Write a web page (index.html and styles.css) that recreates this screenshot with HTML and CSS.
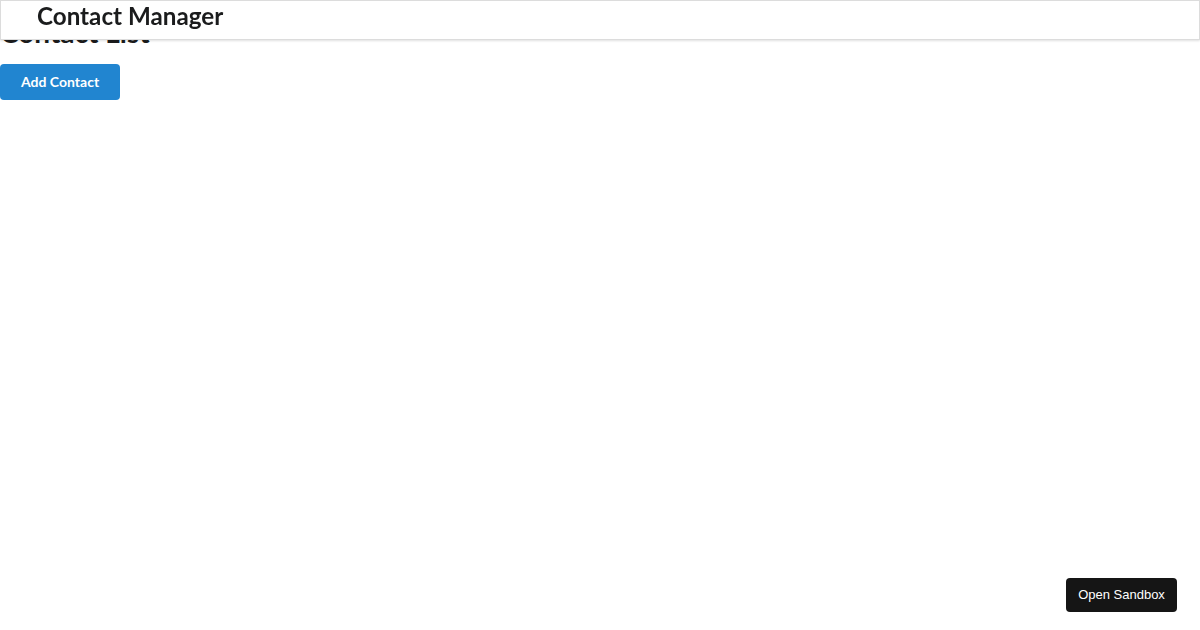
FILE: index.html
```html
<!DOCTYPE html>
<html>
<head>
<meta charset="utf-8">
<link rel="stylesheet" href="styles.css">
</head>
<body>
<header class="topbar">
  <span class="brand">Contact Manager</span>
</header>
<main class="content">
  <h1 class="page-title">Contact List</h1>
  <button class="btn-primary">Add Contact</button>
</main>
<a class="sandbox-btn">Open Sandbox</a>
</body>
</html>
```
FILE: styles.css
```css
html, body {
  margin: 0;
  padding: 0;
  background: #fff;
  font-family: Lato, "Helvetica Neue", Arial, sans-serif;
  color: rgba(0,0,0,.87);
}
.topbar {
  position: fixed;
  top: 0;
  left: 0;
  right: 0;
  height: 38px;
  background: #fff;
  border: 1px solid #dcdcdc;
  box-shadow: 0 1px 2px rgba(0,0,0,.12);
  display: flex;
  align-items: flex-start;
  padding-left: 36px;
  z-index: 10;
}
.brand {
  font-size: 24.2px;
  line-height: 1.2;
  font-weight: 700;
  color: #1b1c1d;
}
.content {
  display: flex;
  flex-direction: column;
  align-items: flex-start;
}
.page-title {
  font-size: 28px;
  font-weight: 700;
  line-height: 36px;
  margin: 14px 0 14px;
  color: #1b1c1d;
}
.btn-primary {
  font-family: Lato, "Helvetica Neue", Arial, sans-serif;
  font-size: 14px;
  font-weight: 700;
  color: #fff;
  background: #2185d0;
  border: none;
  border-radius: 4px;
  height: 36px;
  padding: 0 21px 2px;
  white-space: nowrap;
}
.sandbox-btn {
  position: fixed;
  right: 23px;
  bottom: 18px;
  width: 111px;
  height: 34px;
  box-sizing: border-box;
  display: flex;
  align-items: center;
  justify-content: center;
  padding-bottom: 1px;
  background: #151515;
  color: #fff;
  border-radius: 4px;
  font-family: "Liberation Sans", Arial, sans-serif;
  font-size: 13px;
}
```
